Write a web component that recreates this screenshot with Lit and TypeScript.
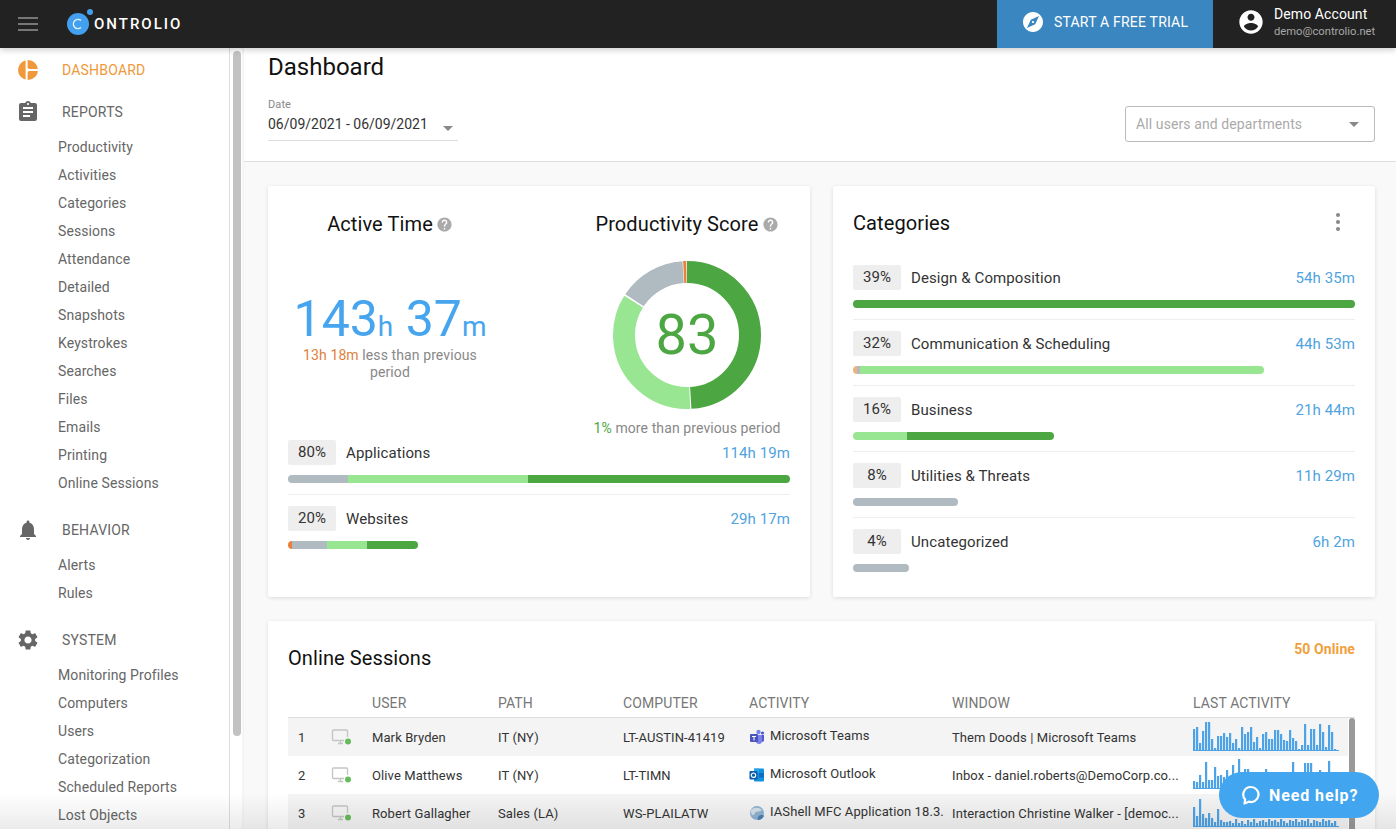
import { LitElement, html, css, svg } from "lit";
import { customElement } from "lit/decorators.js";

const P = {
  assign: "M19 3h-4.18C14.4 1.84 13.3 1 12 1c-1.3 0-2.4.84-2.82 2H5c-1.1 0-2 .9-2 2v14c0 1.1.9 2 2 2h14c1.1 0 2-.9 2-2V5c0-1.1-.9-2-2-2zm-7 0c.55 0 1 .45 1 1s-.45 1-1 1-1-.45-1-1 .45-1 1-1zm2 14H7v-2h7v2zm3-4H7v-2h10v2zm0-4H7V7h10v2z",
  bell: "M12 22c1.1 0 2-.9 2-2h-4c0 1.1.89 2 2 2zm6-6v-5c0-3.07-1.64-5.64-4.5-6.32V4c0-.83-.67-1.5-1.5-1.5s-1.5.67-1.5 1.5v.68C7.63 5.36 6 7.92 6 11v5l-2 2v1h16v-1l-2-2z",
  gear: "M19.14 12.94c.04-.3.06-.61.06-.94 0-.32-.02-.64-.07-.94l2.03-1.58c.18-.14.23-.41.12-.61l-1.92-3.32c-.12-.22-.37-.29-.59-.22l-2.39.96c-.5-.38-1.03-.7-1.62-.94l-.36-2.54c-.04-.24-.24-.41-.48-.41h-3.84c-.24 0-.43.17-.47.41l-.36 2.54c-.59.24-1.13.57-1.62.94l-2.39-.96c-.22-.08-.47 0-.59.22L2.74 8.87c-.12.21-.08.47.12.61l2.03 1.58c-.05.3-.09.63-.09.94s.02.64.07.94l-2.03 1.58c-.18.14-.23.41-.12.61l1.92 3.32c.12.22.37.29.59.22l2.39-.96c.5.38 1.03.7 1.62.94l.36 2.54c.05.24.24.41.48.41h3.84c.24 0 .44-.17.47-.41l.36-2.54c.59-.24 1.13-.56 1.62-.94l2.39.96c.22.08.47 0 .59-.22l1.92-3.32c.12-.22.07-.47-.12-.61l-2.01-1.58zM12 15.6c-1.98 0-3.6-1.62-3.6-3.6s1.62-3.6 3.6-3.6 3.6 1.62 3.6 3.6-1.62 3.6-3.6 3.6z",
  user: "M12 2C6.48 2 2 6.48 2 12s4.48 10 10 10 10-4.48 10-10S17.52 2 12 2zm0 3c1.66 0 3 1.34 3 3s-1.34 3-3 3-3-1.34-3-3 1.34-3 3-3zm0 14.2c-2.5 0-4.71-1.28-6-3.22.03-1.99 4-3.08 6-3.08 1.99 0 5.97 1.09 6 3.08-1.29 1.94-3.5 3.22-6 3.22z",
  explore: "M12 10.9c-.61 0-1.1.49-1.1 1.1s.49 1.1 1.1 1.1c.61 0 1.1-.49 1.1-1.1s-.49-1.1-1.1-1.1zM12 2C6.48 2 2 6.48 2 12s4.48 10 10 10 10-4.48 10-10S17.52 2 12 2zm2.19 12.19L6 18l3.81-8.19L18 6l-3.81 8.19z",
  help: "M12 2C6.48 2 2 6.48 2 12s4.48 10 10 10 10-4.48 10-10S17.52 2 12 2zm1 17h-2v-2h2v2zm2.07-7.75l-.9.92C13.45 12.9 13 13.5 13 15h-2v-.5c0-1.1.45-2.1 1.17-2.83l1.24-1.26c.37-.36.59-.86.59-1.41 0-1.1-.9-2-2-2s-2 .9-2 2H8c0-2.21 1.79-4 4-4s4 1.79 4 4c0 .88-.36 1.68-.93 2.25z",
};

const C = { d: "#4ca642", l: "#98e592", g: "#b0bac1", o: "#e9813a", po: "#f0b27a" };

type Seg = [string, number];
interface Row { pct: string; label: string; value: string; segs: Seg[] }

const APPS: Row[] = [
  { pct: "80%", label: "Applications", value: "114h 19m", segs: [[C.g, 60], [C.l, 180], [C.d, 262]] },
  { pct: "20%", label: "Websites", value: "29h 17m", segs: [[C.o, 4], [C.g, 35], [C.l, 40], [C.d, 51]] },
];
const CATS: Row[] = [
  { pct: "39%", label: "Design & Composition", value: "54h 35m", segs: [[C.d, 502]] },
  { pct: "32%", label: "Communication & Scheduling", value: "44h 53m", segs: [[C.po, 4], [C.g, 3], [C.l, 404]] },
  { pct: "16%", label: "Business", value: "21h 44m", segs: [[C.l, 54], [C.d, 147]] },
  { pct: "8%", label: "Utilities & Threats", value: "11h 29m", segs: [[C.g, 105]] },
  { pct: "4%", label: "Uncategorized", value: "6h 2m", segs: [[C.g, 56]] },
];

const NAV = [
  { head: "REPORTS", icon: P.assign, items: ["Productivity", "Activities", "Categories", "Sessions", "Attendance", "Detailed", "Snapshots", "Keystrokes", "Searches", "Files", "Emails", "Printing", "Online Sessions"] },
  { head: "BEHAVIOR", icon: P.bell, items: ["Alerts", "Rules"] },
  { head: "SYSTEM", icon: P.gear, items: ["Monitoring Profiles", "Computers", "Users", "Categorization", "Scheduled Reports", "Lost Objects"] },
];

const SESSIONS = [
  { n: 1, user: "Mark Bryden", path: "IT (NY)", comp: "LT-AUSTIN-41419", app: "teams", activity: "Microsoft Teams", win: "Them Doods | Microsoft Teams",
    bars: [22,24,8,20,29,29,12,3,15,15,18,14,18,8,12,3,24,17,19,24,9,14,3,17,19,12,12,21,21,17,11,10,21,13,10,2,6,27,6,22,22,6,27,19,4,26,19,2] },
  { n: 2, user: "Olive Matthews", path: "IT (NY)", comp: "LT-TIMN", app: "outlook", activity: "Microsoft Outlook", win: "Inbox - daniel.roberts@DemoCorp.co...",
    bars: [8,7,14,7,27,9,9,22,13,14,12,19,13,24,12,30,12,20,20,8,10,6,9,10,20,8,6,9,11,7,8,9,17,27,8,9,7,26,26,26,7,9,19,8,9,28,7,6] },
  { n: 3, user: "Robert Gallagher", path: "Sales (LA)", comp: "WS-PLAILATW", app: "globe", activity: "IAShell MFC Application 18.3.", win: "Interaction Christine Walker - [democ...",
    bars: [20,11,28,13,9,14,9,5,18,7,5,5,6,4,8,4,6,3,7,5,8,4,6,7,5,8,6,7,5,8,6,4,7,6,8,5,7,6,8,4,7,6,5,8,6,7,4,6] },
];

const DONUT: [string, number, number][] = [
  [C.d, 0, 176.5],
  [C.l, 177.5, 302],
  [C.g, 303.5, 356.5],
  [C.o, 357, 359.5],
];

@customElement("app-root")
export class AppRoot extends LitElement {
  static styles = css`
    :host { display: block; height: 100vh; overflow: hidden; position: relative; font-family: Roboto, "Liberation Sans", sans-serif; color: #333; background: #f9f9f9; letter-spacing: .1px; }
    * { box-sizing: border-box; }
    svg { display: block; flex: none; }

    .top { height: 48px; background: #222; display: flex; align-items: center; position: relative; z-index: 3; box-shadow: 0 2px 6px rgba(0,0,0,.2); }
    .burger { margin-left: 18px; width: 20px; display: flex; flex-direction: column; gap: 4px; }
    .burger i { display: block; height: 2px; background: #777; }
    .logo { margin-left: 29px; display: flex; align-items: center; }
    .brand { color: #fff; font-size: 15px; font-weight: 500; letter-spacing: 2px; line-height: 48px; }
    .spacer { flex: 1; }
    .trial { width: 216px; height: 48px; background: #3a86c0; color: #fff; font-size: 14px; letter-spacing: .2px; display: flex; align-items: center; gap: 9px; padding-left: 24px; padding-bottom: 5px; }
    .acct { width: 183px; height: 48px; display: flex; align-items: center; padding-left: 24px; gap: 9px; padding-bottom: 4px; }
    .acct .name { color: #fff; font-size: 14px; line-height: 17px; }
    .acct .mail { color: #a8a8a8; font-size: 11.2px; line-height: 15px; margin-top: 1px; letter-spacing: 0; }

    .body { display: flex; height: calc(100% - 48px); }
    .side { width: 230px; flex: none; background: #fff; border-right: 1px solid #ddd; padding-top: 1px; overflow: hidden; }
    .rail { width: 14px; flex: none; background: #fff; padding: 3px 3px 0; box-shadow: inset -2px 0 3px -1px rgba(0,0,0,.08); }
    .thumb { width: 8px; height: 685px; background: #c2c2c2; border-radius: 4px; }
    .head { display: flex; align-items: center; height: 44px; padding-top: 1px; font-size: 14px; color: #666; letter-spacing: .2px; }
    .head.dash { height: 40px; color: #f0983a; }
    .head .ic { width: 62px; padding-left: 16px; }
    .sub { margin-bottom: 10px; }
    .sub div { height: 28px; line-height: 28px; padding-left: 58px; font-size: 14px; color: #666; white-space: nowrap; }

    .main { flex: 1; min-width: 0; overflow: hidden; }
    .filters { background: #fff; height: 114px; border-bottom: 1px solid #ddd; padding: 4px 21px 0 24px; position: relative; }
    h1 { margin: 0; font-size: 24px; font-weight: 400; line-height: 30px; color: #111; letter-spacing: 0; }
    .fl { display: flex; justify-content: space-between; align-items: flex-start; margin-top: 15px; }
    .date { width: 190px; height: 44px; border-bottom: 1px solid #ddd; padding-top: 1px; }
    .date label { display: block; font-size: 11px; line-height: 14px; color: #888; }
    .date .v { display: flex; justify-content: space-between; align-items: center; font-size: 14px; line-height: 26px; color: #333; height: 24px; letter-spacing: 0; }
    .caret { width: 0; height: 0; border: 5px solid transparent; border-top-color: #888; border-bottom-width: 0; }
    .date .caret { margin: 8px 5px 0 0; }
    .sel { width: 250px; height: 36px; border: 1px solid #bbb; border-radius: 3px; display: flex; justify-content: space-between; align-items: center; padding: 0 15px 0 10px; font-size: 14px; color: #aaa; margin-top: 9px; }

    .grid { padding: 24px 21px 0 24px; display: grid; grid-template-columns: 542px 542px; column-gap: 23px; row-gap: 24px; }
    .card { background: #fff; height: 411px; padding: 24px 20px 0; box-shadow: 0 1px 4px rgba(0,0,0,.12); border-radius: 2px; }
    .card.wide { grid-column: 1 / 3; height: 300px; }
    .card.act { padding-top: 26px; }
    .stats { display: flex; gap: 92px; height: 228px; }
    .stat { display: flex; flex-direction: column; align-items: center; text-align: center; }
    .stat.l { width: 204px; }
    .stat.r { width: 206px; }
    .ttl { display: flex; align-items: center; gap: 3px; font-size: 20px; line-height: 24px; color: #111; white-space: nowrap; }
    .big { color: #46a5ee; font-size: 50px; line-height: 50px; margin-top: 58px; white-space: nowrap; letter-spacing: 0; }
    .big small { font-size: 28px; }
    .cmp { font-size: 14px; line-height: 17px; color: #888; margin-top: -5px; }
    .cmp b { font-weight: 400; color: #e0813a; }
    .cmp b.g { color: #4ca642; }
    .donut { position: relative; width: 150px; height: 150px; margin-top: 24px; }
    .score { position: absolute; inset: 0; display: flex; align-items: center; justify-content: center; font-size: 56px; color: #4ca642; letter-spacing: 0; }
    .cmp.r { margin-top: 10px; white-space: nowrap; }

    .row { border-bottom: 1px solid #eee; padding-bottom: 11px; margin-bottom: 11px; }
    .row.last { border-bottom: 0; }
    .rt { display: flex; align-items: center; height: 25px; font-size: 15px; }
    .pct { width: 48px; height: 25px; line-height: 25px; text-align: center; background: #eee; border-radius: 2px; margin-right: 10px; color: #333; }
    .lab { flex: 1; color: #333; }
    .val { color: #4ea3e0; }
    .bar { display: flex; height: 8px; margin-top: 10px; border-radius: 4px; overflow: hidden; width: max-content; }
    .bar i { display: block; height: 8px; }

    .chead { display: flex; justify-content: space-between; align-items: center; height: 26px; margin-bottom: 29px; }
    .chead .ttl { line-height: 26px; }
    .kebab { display: flex; flex-direction: column; gap: 3px; margin: -2px 15px 0 0; }
    .kebab i { display: block; width: 4px; height: 4px; border-radius: 2px; background: #888; }
    .shead { display: flex; justify-content: space-between; align-items: flex-start; height: 26px; }
    .shead .ttl { line-height: 26px; }
    .online { color: #f0a03c; font-size: 14px; font-weight: 700; line-height: 16px; margin-top: -4px; }

    .cols { display: grid; grid-template-columns: 10px 33px 41px 126px 125px 126px 203px 241px 1fr; align-items: center; }
    .thead { height: 29px; margin-top: 18px; border-bottom: 1px solid #ddd; font-size: 14px; color: #777; }
    .tbody { display: flex; }
    .rows { width: 1060px; }
    .tr { height: 38px; font-size: 13px; color: #333; }
    .tr.alt { background: #f4f4f4; }
    .tr > div { white-space: nowrap; overflow: hidden; }
    .act-cell { display: flex; align-items: center; gap: 5px; margin-top: -4px; height: 20px; }
    .act-cell svg { margin-top: 4px; }
    .spark { align-self: end; padding-bottom: 5px; }
    .tthumb { width: 6px; height: 120px; margin-left: 1px; background: #999; border-radius: 3px; }

    .fade { position: absolute; left: 0; right: 0; bottom: 0; height: 36px; background: linear-gradient(rgba(0,0,0,0), rgba(0,0,0,.08)); z-index: 2; pointer-events: none; }
    .needhelp { position: absolute; left: 1219px; top: 772px; width: 160px; height: 46px; border-radius: 23px; background: #42a5f0; color: #fff; font-size: 16px; font-weight: 700; letter-spacing: .9px; display: flex; align-items: center; gap: 8px; padding-left: 22px; z-index: 4; }
  `;

  private icon(d: string, size: number, fill: string) {
    return html`<svg width=${size} height=${size} viewBox="0 0 24 24" fill=${fill}><path d=${d}></path></svg>`;
  }

  private row(r: Row, last: boolean) {
    return html`<div class="row ${last ? "last" : ""}">
      <div class="rt"><span class="pct">${r.pct}</span><span class="lab">${r.label}</span><span class="val">${r.value}</span></div>
      <div class="bar">${r.segs.map(([c, w]) => html`<i style="background:${c};width:${w}px"></i>`)}</div>
    </div>`;
  }

  private appIcon(kind: string) {
    if (kind === "teams")
      return html`<svg width="16" height="16" viewBox="0 0 16 16">
        <circle cx="9.5" cy="3" r="2.2" fill="#7b83eb"></circle><circle cx="13.5" cy="4" r="1.6" fill="#5059c9"></circle>
        <path d="M11 6h4v5a2 2 0 0 1-4 0z" fill="#5059c9"></path><path d="M6 6h7v6a3 3 0 0 1-6 0z" fill="#7b83eb"></path>
        <rect x="1" y="5" width="8" height="8" rx="1" fill="#4b53bc"></rect><path d="M3 7h4v1H5.5v3.5h-1V8H3z" fill="#fff"></path></svg>`;
    if (kind === "outlook")
      return html`<svg width="16" height="16" viewBox="0 0 16 16">
        <rect x="5" y="1.5" width="10" height="13" rx="1" fill="#1490df"></rect><rect x="5" y="1.5" width="5" height="4.5" fill="#28a8ea"></rect><rect x="10" y="6" width="5" height="4.5" fill="#0f6cbd"></rect>
        <rect x="0.5" y="4" width="8" height="8.5" rx="1" fill="#0a5cad"></rect><circle cx="4.5" cy="8.2" r="2.2" fill="none" stroke="#fff" stroke-width="1.2"></circle></svg>`;
    return html`<svg width="16" height="16" viewBox="0 0 16 16">
      <circle cx="8" cy="8" r="7" fill="#8fb2d2"></circle><path d="M2 5c3-3 8-3 11 0-2 2-4 1-6 2s-1 3-3 3-2-3-2-5z" fill="#d3dfe8"></path>
      <path d="M9 15c-1-3 1-5 4-5 1 0 2 .5 2 1-1 2-3 4-6 4z" fill="#4a7fb0"></path></svg>`;
  }

  private spark(bars: number[]) {
    return html`<svg width="146" height="30" viewBox="0 0 146 30">
      ${bars.map((h, i) => svg`<rect x=${i * 3} y=${30 - h} width="2.2" height=${h} fill="#4ea3e6"></rect>`)}
      <rect x="0" y="29" width="146" height="1" fill="#4ea3e6"></rect>
    </svg>`;
  }

  private navHead(label: string, d: string) {
    return html`<div class="head"><span class="ic">${this.icon(d, 24, "#666")}</span>${label}</div>`;
  }

  render() {
    return html`
      <div class="top">
        <div class="burger"><i></i><i></i><i></i></div>
        <div class="logo">
          <svg width="27" height="32" viewBox="0 0 27 32">
            <circle cx="11" cy="16" r="11" fill="#42a0ee"></circle>
            <circle cx="23" cy="4" r="3" fill="#42a0ee"></circle>
            <path d="M14 12.5a4.6 4.6 0 1 0 0 7" fill="none" stroke="#e6f3fd" stroke-width="1.4"></path>
          </svg>
          <span class="brand">ONTROLIO</span>
        </div>
        <div class="spacer"></div>
        <div class="trial">${this.icon(P.explore, 24, "#fff")}START A FREE TRIAL</div>
        <div class="acct">
          ${this.icon(P.user, 28, "#fff")}
          <div><div class="name">Demo Account</div><div class="mail">demo@controlio.net</div></div>
        </div>
      </div>

      <div class="body">
        <div class="side">
          <div class="head dash">
            <span class="ic">
              <svg width="24" height="24" viewBox="0 0 24 24">
                <circle cx="12" cy="12" r="10" fill="#f0983a"></circle>
                <rect x="9.6" y="1" width="2" height="22" fill="#fff"></rect>
                <rect x="10" y="11" width="14" height="2" fill="#fff"></rect>
                <path d="M10 8.5l4 3.5-4 3.5z" fill="#fff"></path>
              </svg>
            </span>DASHBOARD
          </div>
          ${NAV.map((g) => html`
            ${this.navHead(g.head, g.icon)}
            <div class="sub">${g.items.map((t) => html`<div>${t}</div>`)}</div>
          `)}
        </div>
        <div class="rail"><div class="thumb"></div></div>

        <div class="main">
          <div class="filters">
            <h1>Dashboard</h1>
            <div class="fl">
              <div class="date">
                <label>Date</label>
                <div class="v">06/09/2021 - 06/09/2021<span class="caret"></span></div>
              </div>
              <div class="sel">All users and departments<span class="caret"></span></div>
            </div>
          </div>

          <div class="grid">
            <div class="card act">
              <div class="stats">
                <div class="stat l">
                  <div class="ttl">Active Time ${this.icon(P.help, 17, "#aaa")}</div>
                  <div class="big">143<small>h</small> 37<small>m</small></div>
                  <div class="cmp"><b>13h 18m</b> less than previous period</div>
                </div>
                <div class="stat r">
                  <div class="ttl">Productivity Score ${this.icon(P.help, 17, "#aaa")}</div>
                  <div class="donut">
                    <svg width="150" height="150" viewBox="0 0 150 150">
                      ${DONUT.map(([c, a, b]) => svg`<circle cx="75" cy="75" r="63" fill="none" stroke=${c} stroke-width="22" pathLength="360"
                        stroke-dasharray="${b - a} ${360 - (b - a)}" transform="rotate(${a - 90} 75 75)"></circle>`)}
                    </svg>
                    <div class="score">83</div>
                  </div>
                  <div class="cmp r"><b class="g">1%</b> more than previous period</div>
                </div>
              </div>
              ${APPS.map((r, i) => this.row(r, i === APPS.length - 1))}
            </div>

            <div class="card">
              <div class="chead">
                <div class="ttl">Categories</div>
                <div class="kebab"><i></i><i></i><i></i></div>
              </div>
              ${CATS.map((r, i) => this.row(r, i === CATS.length - 1))}
            </div>

            <div class="card wide">
              <div class="shead"><div class="ttl">Online Sessions</div><div class="online">50 Online</div></div>
              <div class="cols thead">
                <span></span><span></span><span></span>
                <span>USER</span><span>PATH</span><span>COMPUTER</span><span>ACTIVITY</span><span>WINDOW</span><span>LAST ACTIVITY</span>
              </div>
              <div class="tbody">
                <div class="rows">
                  ${SESSIONS.map((s) => html`
                    <div class="cols tr ${s.n % 2 ? "alt" : ""}">
                      <span></span>
                      <div>${s.n}</div>
                      <div>
                        <svg width="20" height="17" viewBox="0 0 20 17">
                          <path d="M16.5 8V2a1 1 0 0 0-1-1h-13a1 1 0 0 0-1 1v8.500a1 1 0 0 0 1 1H13M7 14.500h5M9.500 11.500V14.500" fill="none" stroke="#c4c4c4" stroke-width="1.3"></path>
                          <circle cx="17" cy="12.500" r="3" fill="#66bb5c"></circle>
                        </svg>
                      </div>
                      <div>${s.user}</div>
                      <div>${s.path}</div>
                      <div>${s.comp}</div>
                      <div class="act-cell">${this.appIcon(s.app)}<span>${s.activity}</span></div>
                      <div>${s.win}</div>
                      <div class="spark">${this.spark(s.bars)}</div>
                    </div>
                  `)}
                </div>
                <div class="tthumb"></div>
              </div>
            </div>
          </div>
        </div>
      </div>

      <div class="fade"></div>
      <div class="needhelp">
        <svg width="20" height="20" viewBox="0 0 20 20"><path d="M10 2a7.500 7.500 0 1 1-2.200 14.670L3.500 18.500l.7-4A7.500 7.500 0 0 1 10 2z" fill="none" stroke="#fff" stroke-width="2.200" stroke-linejoin="round"></path></svg>
        Need help?
      </div>
    `;
  }
}
